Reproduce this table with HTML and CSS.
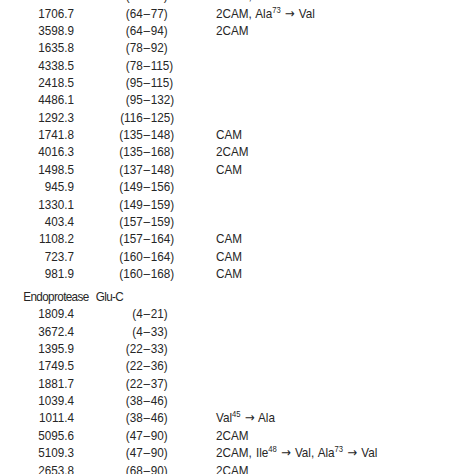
FILE: index.html
```html
<!DOCTYPE html>
<html>
<head>
<meta charset="utf-8">
<link rel="stylesheet" href="styles.css">
</head>
<body>
<div class="table">
  <div class="row"><span class="mass">1563.7</span><span class="rl">(64</span><span class="dash">–</span><span class="rr">76)</span><span class="mod">2CAM, Ala<sup>73</sup> <span class="arr">→</span> Val</span></div>
  <div class="row"><span class="mass">1706.7</span><span class="rl">(64</span><span class="dash">–</span><span class="rr">77)</span><span class="mod">2CAM, Ala<sup>73</sup> <span class="arr">→</span> Val</span></div>
  <div class="row"><span class="mass">3598.9</span><span class="rl">(64</span><span class="dash">–</span><span class="rr">94)</span><span class="mod">2CAM</span></div>
  <div class="row"><span class="mass">1635.8</span><span class="rl">(78</span><span class="dash">–</span><span class="rr">92)</span><span class="mod"></span></div>
  <div class="row"><span class="mass">4338.5</span><span class="rl">(78</span><span class="dash">–</span><span class="rr">115)</span><span class="mod"></span></div>
  <div class="row"><span class="mass">2418.5</span><span class="rl">(95</span><span class="dash">–</span><span class="rr">115)</span><span class="mod"></span></div>
  <div class="row"><span class="mass">4486.1</span><span class="rl">(95</span><span class="dash">–</span><span class="rr">132)</span><span class="mod"></span></div>
  <div class="row"><span class="mass">1292.3</span><span class="rl">(116</span><span class="dash">–</span><span class="rr">125)</span><span class="mod"></span></div>
  <div class="row"><span class="mass">1741.8</span><span class="rl">(135</span><span class="dash">–</span><span class="rr">148)</span><span class="mod">CAM</span></div>
  <div class="row"><span class="mass">4016.3</span><span class="rl">(135</span><span class="dash">–</span><span class="rr">168)</span><span class="mod">2CAM</span></div>
  <div class="row"><span class="mass">1498.5</span><span class="rl">(137</span><span class="dash">–</span><span class="rr">148)</span><span class="mod">CAM</span></div>
  <div class="row"><span class="mass">945.9</span><span class="rl">(149</span><span class="dash">–</span><span class="rr">156)</span><span class="mod"></span></div>
  <div class="row"><span class="mass">1330.1</span><span class="rl">(149</span><span class="dash">–</span><span class="rr">159)</span><span class="mod"></span></div>
  <div class="row"><span class="mass">403.4</span><span class="rl">(157</span><span class="dash">–</span><span class="rr">159)</span><span class="mod"></span></div>
  <div class="row"><span class="mass">1108.2</span><span class="rl">(157</span><span class="dash">–</span><span class="rr">164)</span><span class="mod">CAM</span></div>
  <div class="row"><span class="mass">723.7</span><span class="rl">(160</span><span class="dash">–</span><span class="rr">164)</span><span class="mod">CAM</span></div>
  <div class="row"><span class="mass">981.9</span><span class="rl">(160</span><span class="dash">–</span><span class="rr">168)</span><span class="mod">CAM</span></div>
  <div class="section">Endoprotease Glu-C</div>
  <div class="row"><span class="mass">1809.4</span><span class="rl">(4</span><span class="dash">–</span><span class="rr">21)</span><span class="mod"></span></div>
  <div class="row"><span class="mass">3672.4</span><span class="rl">(4</span><span class="dash">–</span><span class="rr">33)</span><span class="mod"></span></div>
  <div class="row"><span class="mass">1395.9</span><span class="rl">(22</span><span class="dash">–</span><span class="rr">33)</span><span class="mod"></span></div>
  <div class="row"><span class="mass">1749.5</span><span class="rl">(22</span><span class="dash">–</span><span class="rr">36)</span><span class="mod"></span></div>
  <div class="row"><span class="mass">1881.7</span><span class="rl">(22</span><span class="dash">–</span><span class="rr">37)</span><span class="mod"></span></div>
  <div class="row"><span class="mass">1039.4</span><span class="rl">(38</span><span class="dash">–</span><span class="rr">46)</span><span class="mod"></span></div>
  <div class="row"><span class="mass">1011.4</span><span class="rl">(38</span><span class="dash">–</span><span class="rr">46)</span><span class="mod">Val<sup>45</sup> <span class="arr">→</span> Ala</span></div>
  <div class="row"><span class="mass">5095.6</span><span class="rl">(47</span><span class="dash">–</span><span class="rr">90)</span><span class="mod">2CAM</span></div>
  <div class="row"><span class="mass">5109.3</span><span class="rl">(47</span><span class="dash">–</span><span class="rr">90)</span><span class="mod">2CAM, Ile<sup>48</sup> <span class="arr">→</span> Val, Ala<sup>73</sup> <span class="arr">→</span> Val</span></div>
  <div class="row"><span class="mass">2653.8</span><span class="rl">(68</span><span class="dash">–</span><span class="rr">90)</span><span class="mod">2CAM</span></div>
</div>
</body>
</html>
```
FILE: styles.css
```css
html, body {
  margin: 0;
  padding: 0;
  background: #fff;
  overflow: hidden;
}
body {
  font-family: "Liberation Sans", Arial, sans-serif;
  font-size: 13px;
  color: #262626;
}
.table {
  margin-top: -12.75px;
  width: 470px;
  transform: scaleX(0.9);
  transform-origin: 0 0;
}
.row {
  display: grid;
  grid-template-columns: 82.2px 76.4px 8.8px 72.6px 1fr;
  height: 17.36px;
  line-height: 17.36px;
  white-space: nowrap;
}
.mass { text-align: right; }
.rl { text-align: right; }
.dash { text-align: center; }
.rr { text-align: left; }
.mod { text-align: left; word-spacing: 1px; }
.section {
  margin-top: 5.6px;
  height: 17.36px;
  line-height: 17.36px;
  padding-left: 25.9px;
  letter-spacing: -0.7px;
  word-spacing: 5px;
  white-space: nowrap;
}
sup {
  font-size: 8.5px;
  line-height: 0;
  vertical-align: 5px;
}
.arr {
  font-family: "DejaVu Sans", sans-serif;
  font-size: 13px;
  line-height: 0;
}
```
